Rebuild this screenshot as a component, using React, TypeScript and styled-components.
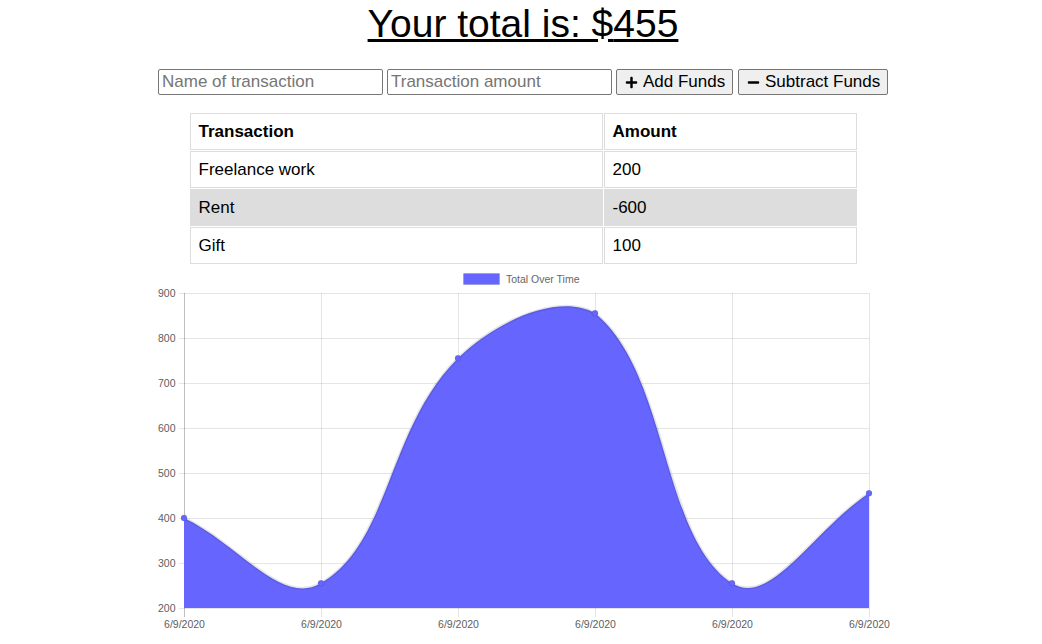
import React from 'react';
import styled, { createGlobalStyle } from 'styled-components';
import { FaPlus, FaMinus } from 'react-icons/fa';

interface Transaction {
  name: string;
  value: number;
}

const transactions: Transaction[] = [
  { name: 'Freelance work', value: 200 },
  { name: 'Rent', value: -600 },
  { name: 'Gift', value: 100 },
];

// running totals plotted on the chart
const totals = [400, 255, 755, 855, 255, 455];

const area = { left: 184, right: 869, top: 293, bottom: 608 };
const step = (area.right - area.left) / (totals.length - 1);
const yMin = 200;
const yMax = 900;
const yFor = (v: number) =>
  area.bottom - ((v - yMin) / (yMax - yMin)) * (area.bottom - area.top);

const GlobalStyle = createGlobalStyle`
  html, body {
    margin: 0;
    padding: 0;
    overflow: hidden;
    background: #fff;
  }

  body {
    font-family: 'Liberation Sans', Arial, sans-serif;
    color: #000;
  }
`;

const Page = styled.main`
  display: flex;
  flex-direction: column;
  align-items: center;
  box-sizing: border-box;
  width: 1042px;
  height: 644px;
  padding-left: 4px;
`;

const Total = styled.h1`
  margin: 0;
  padding-top: 1px;
  font-size: 39px;
  font-weight: 400;
  line-height: 45px;
  text-decoration: underline;
`;

const Form = styled.div`
  display: flex;
  gap: 4px;
  margin-top: 23px;
`;

const TextInput = styled.input`
  box-sizing: border-box;
  width: 225px;
  height: 26px;
  padding: 1px 3px;
  border: 1px solid #767676;
  border-radius: 2px;
  font: 17px 'Liberation Sans', Arial, sans-serif;
  color: #000;
  background: #fff;

  &::placeholder {
    color: #757575;
  }
`;

const Button = styled.button<{ $width: number; $offset?: number }>`
  display: flex;
  align-items: center;
  gap: 5px;
  box-sizing: border-box;
  width: ${props => props.$width}px;
  height: 26px;
  margin-left: ${props => props.$offset || 0}px;
  padding: 0 6px 0 8px;
  border: 1px solid #767676;
  border-radius: 2px;
  background: #efefef;
  font: 17px 'Liberation Sans', Arial, sans-serif;
  color: #000;
  white-space: nowrap;

  svg {
    flex: none;
  }
`;

const Table = styled.table`
  width: 669px;
  margin-top: 17px;
  border-collapse: separate;
  border-spacing: 1px;
  font-size: 17px;
`;

const HeadCell = styled.th`
  box-sizing: border-box;
  padding: 8px;
  border: 1px solid #ddd;
  line-height: 19px;
  text-align: left;
  font-weight: 700;

  &:first-child {
    width: 413px;
  }
`;

const Row = styled.tr`
  &:nth-child(even) td {
    background: #ddd;
  }
`;

const Cell = styled.td`
  box-sizing: border-box;
  padding: 8px;
  border: 1px solid #ddd;
  line-height: 19px;
`;

const ChartBox = styled.svg`
  display: block;
  flex: none;
  margin-top: 1px;
  font-family: 'Liberation Sans', Arial, sans-serif;
`;

type Pt = { x: number; y: number };

const dist = (a: Pt, b: Pt) => Math.hypot(b.x - a.x, b.y - a.y);
const clamp = (v: number, lo: number, hi: number) => Math.max(lo, Math.min(hi, v));

// same spline as chart.js (tension 0.4), control points capped to the area
function controlPoints(points: Pt[], t = 0.4) {
  return points.map((cur, i) => {
    const prev = points[i - 1] || cur;
    const next = points[i + 1] || cur;
    const d01 = dist(prev, cur);
    const d12 = dist(cur, next);
    const s01 = d01 + d12 === 0 ? 0 : d01 / (d01 + d12);
    const s12 = d01 + d12 === 0 ? 0 : d12 / (d01 + d12);
    const fa = t * s01;
    const fb = t * s12;
    const cap = (p: Pt) => ({
      x: clamp(p.x, area.left, area.right),
      y: clamp(p.y, area.top, area.bottom),
    });
    return {
      before: cap({ x: cur.x - fa * (next.x - prev.x), y: cur.y - fa * (next.y - prev.y) }),
      after: cap({ x: cur.x + fb * (next.x - prev.x), y: cur.y + fb * (next.y - prev.y) }),
    };
  });
}

const Chart: React.FC = () => {
  const points = totals.map((v, i) => ({ x: area.left + i * step, y: yFor(v) }));
  const cps = controlPoints(points);

  let curve = `M ${points[0].x} ${points[0].y}`;
  for (let i = 1; i < points.length; i++) {
    const a = cps[i - 1].after;
    const b = cps[i].before;
    curve += ` C ${a.x} ${a.y} ${b.x} ${b.y} ${points[i].x} ${points[i].y}`;
  }
  const fill = `${curve} L ${area.right} ${area.bottom} L ${area.left} ${area.bottom} Z`;

  const yTicks = [900, 800, 700, 600, 500, 400, 300, 200];

  return (
    <ChartBox width={760} height={370} viewBox="143 266 760 370">
      <g>
        <rect x={463.5} y={273.5} width={36} height={11} fill="#6666ff" stroke="rgba(0,0,0,0.1)" />
        <text x={506} y={282.5} fontSize={10.5} fill="#666">
          Total Over Time
        </text>
      </g>

      {yTicks.map(v => (
        <g key={v}>
          <line
            x1={179}
            x2={area.right}
            y1={yFor(v) + 0.5}
            y2={yFor(v) + 0.5}
            stroke="rgba(0,0,0,0.1)"
          />
          <text x={175.5} y={yFor(v) + 4} fontSize={10.5} fill="#606060" textAnchor="end">
            {v}
          </text>
        </g>
      ))}

      {points.map((p, i) => (
        <g key={i}>
          <line
            x1={p.x + 0.5}
            x2={p.x + 0.5}
            y1={area.top}
            y2={617}
            stroke={i === 0 ? 'rgba(0,0,0,0.25)' : 'rgba(0,0,0,0.1)'}
          />
          <text x={p.x + 0.5} y={628} fontSize={10.5} fill="#606060" textAnchor="middle">
            6/9/2020
          </text>
        </g>
      ))}

      <path d={fill} fill="#6666ff" />
      <path d={curve} fill="none" stroke="rgba(0,0,0,0.1)" strokeWidth={3} />

      {points.map((p, i) => (
        <circle key={i} cx={p.x} cy={p.y} r={3} fill="#6666ff" stroke="rgba(0,0,0,0.1)" />
      ))}
    </ChartBox>
  );
};

const App: React.FC = () => {
  const total = transactions.reduce((sum, t) => sum + t.value, 0) + 755;

  return (
    <>
      <GlobalStyle />
      <Page>
        <Total>Your total is: ${total}</Total>
        <Form>
          <TextInput type="text" placeholder="Name of transaction" />
          <TextInput type="number" placeholder="Transaction amount" />
          <Button $width={117}>
            <FaPlus size={13} />
            Add Funds
          </Button>
          <Button $width={150} $offset={1}>
            <FaMinus size={13} />
            Subtract Funds
          </Button>
        </Form>
        <Table>
          <thead>
            <tr>
              <HeadCell>Transaction</HeadCell>
              <HeadCell>Amount</HeadCell>
            </tr>
          </thead>
          <tbody>
            {transactions.map(t => (
              <Row key={t.name}>
                <Cell>{t.name}</Cell>
                <Cell>{t.value}</Cell>
              </Row>
            ))}
          </tbody>
        </Table>
        <Chart />
      </Page>
    </>
  );
};

export default App;
